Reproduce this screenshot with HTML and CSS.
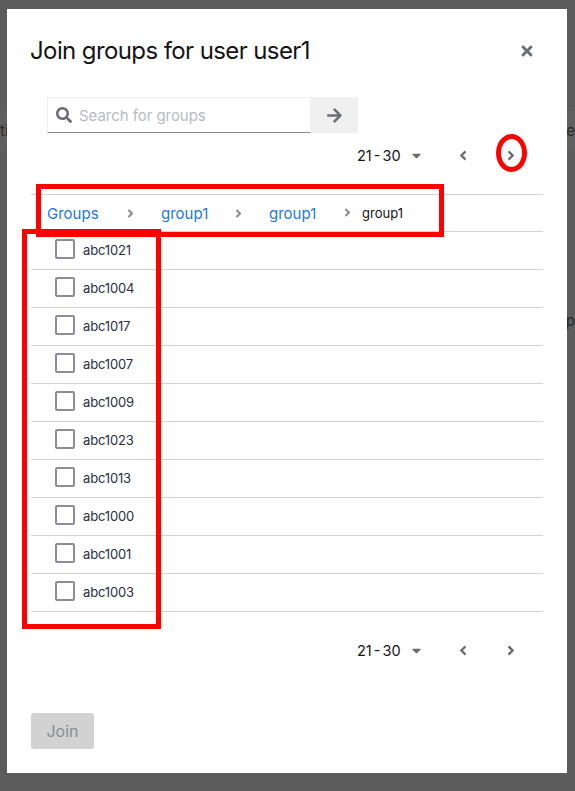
FILE: index.html
```html
<!DOCTYPE html>
<html lang="en">
<head>
<meta charset="utf-8">
<title>Join groups</title>
<link rel="stylesheet" href="styles.css">
</head>
<body>
<div class="backdrop-band"><span class="peek-left">ti</span><span class="peek-right">e</span></div>
<span class="peek-mid">p</span>
<main class="modal">
  <header class="modal-head">
    <h1 class="title">Join groups for user user1</h1>
    <button class="close" aria-label="Close"><svg viewBox="0 0 352 512" class="close-icon"><path fill="currentColor" d="M242.72 256l100.07-100.07c12.28-12.28 12.28-32.19 0-44.48l-22.24-22.24c-12.28-12.28-32.19-12.28-44.48 0L176 189.28 75.93 89.21c-12.28-12.28-32.19-12.28-44.48 0L9.21 111.45c-12.28 12.28-12.28 32.19 0 44.48L109.28 256 9.21 356.07c-12.28 12.28-12.28 32.19 0 44.48l22.24 22.24c12.28 12.28 32.2 12.28 44.48 0L176 322.72l100.07 100.07c12.28 12.28 32.2 12.28 44.48 0l22.24-22.24c12.28-12.28 12.28-32.19 0-44.48L242.72 256z"/></svg></button>
  </header>
  <div class="search-row">
    <div class="search-box">
      <svg viewBox="0 0 512 512" class="search-icon"><path fill="currentColor" d="M505 442.7L405.3 343c-4.5-4.5-10.6-7-17-7H372c27.6-35.3 44-79.7 44-128C416 93.1 322.9 0 208 0S0 93.1 0 208s93.1 208 208 208c48.3 0 92.7-16.4 128-44v16.3c0 6.4 2.5 12.5 7 17l99.7 99.7c9.4 9.4 24.6 9.4 33.9 0l28.3-28.3c9.4-9.4 9.4-24.6.1-34zM208 336c-70.7 0-128-57.2-128-128 0-70.7 57.2-128 128-128 70.7 0 128 57.2 128 128 0 70.7-57.2 128-128 128z"/></svg>
      <span class="placeholder">Search for groups</span>
    </div>
    <button class="go" aria-label="Search"><svg viewBox="0 0 448 512" class="go-icon"><path fill="currentColor" d="M190.5 66.9l22.2-22.2c9.4-9.4 24.6-9.4 33.9 0L441 239c9.4 9.4 9.4 24.6 0 33.9L246.6 467.3c-9.4 9.4-24.6 9.4-33.9 0l-22.2-22.2c-9.5-9.5-9.3-25 .4-34.3L311.4 296H24c-13.3 0-24-10.7-24-24v-32c0-13.3 10.7-24 24-24h287.4L190.9 101.2c-9.8-9.3-10-24.8-.4-34.3z"/></svg></button>
  </div>
  <div class="pager pager-top">
    <span class="range">21 - 30</span>
    <svg viewBox="0 0 320 512" class="caret"><path fill="currentColor" d="M31.3 192h257.3c17.8 0 26.7 21.5 14.1 34.1L174.1 354.8c-7.8 7.8-20.5 7.8-28.3 0L17.2 226.1C4.6 213.5 13.5 192 31.3 192z"/></svg>
    <svg viewBox="0 0 256 512" class="chev chev-prev"><path fill="currentColor" d="M31.7 239l136-136c9.4-9.4 24.6-9.4 33.9 0l22.6 22.6c9.4 9.4 9.4 24.6 0 33.9L127.9 256l96.4 96.4c9.4 9.4 9.4 24.6 0 33.9L201.7 409c-9.4 9.4-24.6 9.4-33.9 0l-136-136c-9.5-9.4-9.5-24.6-.1-34z"/></svg>
    <svg viewBox="0 0 256 512" class="chev chev-next"><path fill="currentColor" d="M224.3 273l-136 136c-9.4 9.4-24.6 9.4-33.9 0l-22.6-22.6c-9.4-9.4-9.4-24.6 0-33.9l96.4-96.4-96.4-96.4c-9.4-9.4-9.4-24.6 0-33.9L54.3 103c9.4-9.4 24.6-9.4 33.9 0l136 136c9.5 9.4 9.5 24.6.1 34z"/></svg>
  </div>
  <nav class="crumbs">
    <a class="crumb crumb-1">Groups</a>
    <svg viewBox="0 0 256 512" class="sep sep-1"><path fill="currentColor" d="M224.3 273l-136 136c-9.4 9.4-24.6 9.4-33.9 0l-22.6-22.6c-9.4-9.4-9.4-24.6 0-33.9l96.4-96.4-96.4-96.4c-9.4-9.4-9.4-24.6 0-33.9L54.3 103c9.4-9.4 24.6-9.4 33.9 0l136 136c9.5 9.4 9.5 24.6.1 34z"/></svg>
    <a class="crumb crumb-2">group1</a>
    <svg viewBox="0 0 256 512" class="sep sep-2"><path fill="currentColor" d="M224.3 273l-136 136c-9.4 9.4-24.6 9.4-33.9 0l-22.6-22.6c-9.4-9.4-9.4-24.6 0-33.9l96.4-96.4-96.4-96.4c-9.4-9.4-9.4-24.6 0-33.9L54.3 103c9.4-9.4 24.6-9.4 33.9 0l136 136c9.5 9.4 9.5 24.6.1 34z"/></svg>
    <a class="crumb crumb-3">group1</a>
    <svg viewBox="0 0 256 512" class="sep sep-3"><path fill="currentColor" d="M224.3 273l-136 136c-9.4 9.4-24.6 9.4-33.9 0l-22.6-22.6c-9.4-9.4-9.4-24.6 0-33.9l96.4-96.4-96.4-96.4c-9.4-9.4-9.4-24.6 0-33.9L54.3 103c9.4-9.4 24.6-9.4 33.9 0l136 136c9.5 9.4 9.5 24.6.1 34z"/></svg>
    <span class="crumb-current">group1</span>
  </nav>
  <ul class="list">
    <li class="row"><span class="check"></span><span class="name">abc1021</span></li>
    <li class="row"><span class="check"></span><span class="name">abc1004</span></li>
    <li class="row"><span class="check"></span><span class="name">abc1017</span></li>
    <li class="row"><span class="check"></span><span class="name">abc1007</span></li>
    <li class="row"><span class="check"></span><span class="name">abc1009</span></li>
    <li class="row"><span class="check"></span><span class="name">abc1023</span></li>
    <li class="row"><span class="check"></span><span class="name">abc1013</span></li>
    <li class="row"><span class="check"></span><span class="name">abc1000</span></li>
    <li class="row"><span class="check"></span><span class="name">abc1001</span></li>
    <li class="row"><span class="check"></span><span class="name">abc1003</span></li>
  </ul>
  <div class="pager pager-bottom">
    <span class="range">21 - 30</span>
    <svg viewBox="0 0 320 512" class="caret"><path fill="currentColor" d="M31.3 192h257.3c17.8 0 26.7 21.5 14.1 34.1L174.1 354.8c-7.8 7.8-20.5 7.8-28.3 0L17.2 226.1C4.6 213.5 13.5 192 31.3 192z"/></svg>
    <svg viewBox="0 0 256 512" class="chev chev-prev"><path fill="currentColor" d="M31.7 239l136-136c9.4-9.4 24.6-9.4 33.9 0l22.6 22.6c9.4 9.4 9.4 24.6 0 33.9L127.9 256l96.4 96.4c9.4 9.4 9.4 24.6 0 33.9L201.7 409c-9.4 9.4-24.6 9.4-33.9 0l-136-136c-9.5-9.4-9.5-24.6-.1-34z"/></svg>
    <svg viewBox="0 0 256 512" class="chev chev-next"><path fill="currentColor" d="M224.3 273l-136 136c-9.4 9.4-24.6 9.4-33.9 0l-22.6-22.6c-9.4-9.4-9.4-24.6 0-33.9l96.4-96.4-96.4-96.4c-9.4-9.4-9.4-24.6 0-33.9L54.3 103c9.4-9.4 24.6-9.4 33.9 0l136 136c9.5 9.4 9.5 24.6.1 34z"/></svg>
  </div>
  <button class="join">Join</button>
</main>
<div class="mark mark-crumbs"></div>
<div class="mark mark-list"></div>
<div class="mark mark-next"></div>
</body>
</html>
```
FILE: styles.css
```css
* { box-sizing: border-box; }
html, body { margin: 0; height: 791px; overflow: hidden; }
body { position: relative; background: #5c5c5c; font-family: "Inter", "Liberation Sans", sans-serif; color: #151515; padding: 9px 8px 18px 7px; }
button { border: 0; padding: 0; font: inherit; }
.backdrop-band { position: absolute; left: 0; right: 0; top: 111px; height: 40px; background: #606060; color: #2a2a2a; font-size: 15px; line-height: 40px; }
.peek-left { position: absolute; left: 0; }
.peek-right { position: absolute; right: 0; }
.peek-mid { position: absolute; right: 0; top: 311px; color: #2a2a2a; font-size: 15px; }
.modal { position: relative; width: 560px; height: 764px; background: #fff; display: flex; flex-direction: column; padding: 0 24px; }
.modal-head { display: flex; justify-content: space-between; align-items: center; height: 82px; }
.title { margin: 0 0 0 -1px; font-size: 24px; font-weight: 400; letter-spacing: -0.6px; color: #151515; }
.close { background: none; color: #6a6e73; width: 16px; height: 16px; margin: 2px 7px 0 0; display: flex; }
.close-icon { width: 14px; height: 16px; }
.search-row { display: flex; margin: 6px 0 0 16px; height: 36px; }
.search-box { width: 264px; height: 36px; border: 1px solid #f0f0f0; border-bottom: 1px solid #8a8d90; display: flex; align-items: center; padding-left: 8px; gap: 7px; }
.search-icon { width: 16px; height: 16px; color: #6a6e73; }
.placeholder { font-size: 15px; letter-spacing: -0.05px; color: #b8bbbe; }
.go { width: 47px; height: 36px; background: #f0f0f0; color: #6a6e73; display: flex; align-items: center; justify-content: center; }
.go-icon { width: 15px; height: 17px; }
.pager { display: flex; align-items: center; height: 20px; }
.pager-top { margin-top: 12px; }
.pager-bottom { margin-top: 28px; }
.range { margin-left: 326px; font-size: 14.5px; word-spacing: -2px; width: 54px; white-space: nowrap; }
.caret { width: 9px; height: 15px; color: #6a6e73; margin-left: 1px; }
.chev { width: 10px; height: 15px; color: #6a6e73; }
.chev-prev { margin-left: 37px; }
.chev-next { margin-left: 38px; }
.crumbs { display: flex; align-items: center; height: 38px; margin-top: 29px; border-top: 1px solid #d2d2d2; border-bottom: 1px solid #d2d2d2; padding-left: 16px; font-size: 15px; }
.crumb { color: #1f78d8; }
.crumb-1 { width: 79px; }
.sep { width: 9px; height: 13px; color: #8a8d90; }
.sep-3 { position: relative; top: -1px; }
.crumb-2 { margin-left: 26px; width: 73px; }
.crumb-3 { margin-left: 26px; width: 74px; }
.crumb-current { margin-left: 10px; font-size: 13px; color: #151515; }
.list { list-style: none; margin: 0; padding: 0; }
.row { display: flex; align-items: center; height: 38px; border-bottom: 1px solid #d2d2d2; padding-left: 24px; }
.check { width: 20px; height: 20px; border: 2px solid #8b8d9c; border-radius: 2px; background: #fff; position: relative; top: -1px; margin-bottom: 2px; }
.name { margin: 0 0 1px 8px; font-size: 13px; letter-spacing: -0.15px; color: #2b2f40; }
.join { margin-top: 53px; width: 63px; height: 36px; background: #d2d2d2; color: #8a8d90; border-radius: 3px; font-size: 16px; }
.mark { position: absolute; border: 5px solid #f00; pointer-events: none; }
.mark-crumbs { left: 36px; top: 184px; width: 408px; height: 53px; }
.mark-list { left: 22px; top: 229px; width: 139px; height: 400px; }
.mark-next { left: 496px; top: 134px; width: 31px; height: 38px; border-radius: 50%; }
```
